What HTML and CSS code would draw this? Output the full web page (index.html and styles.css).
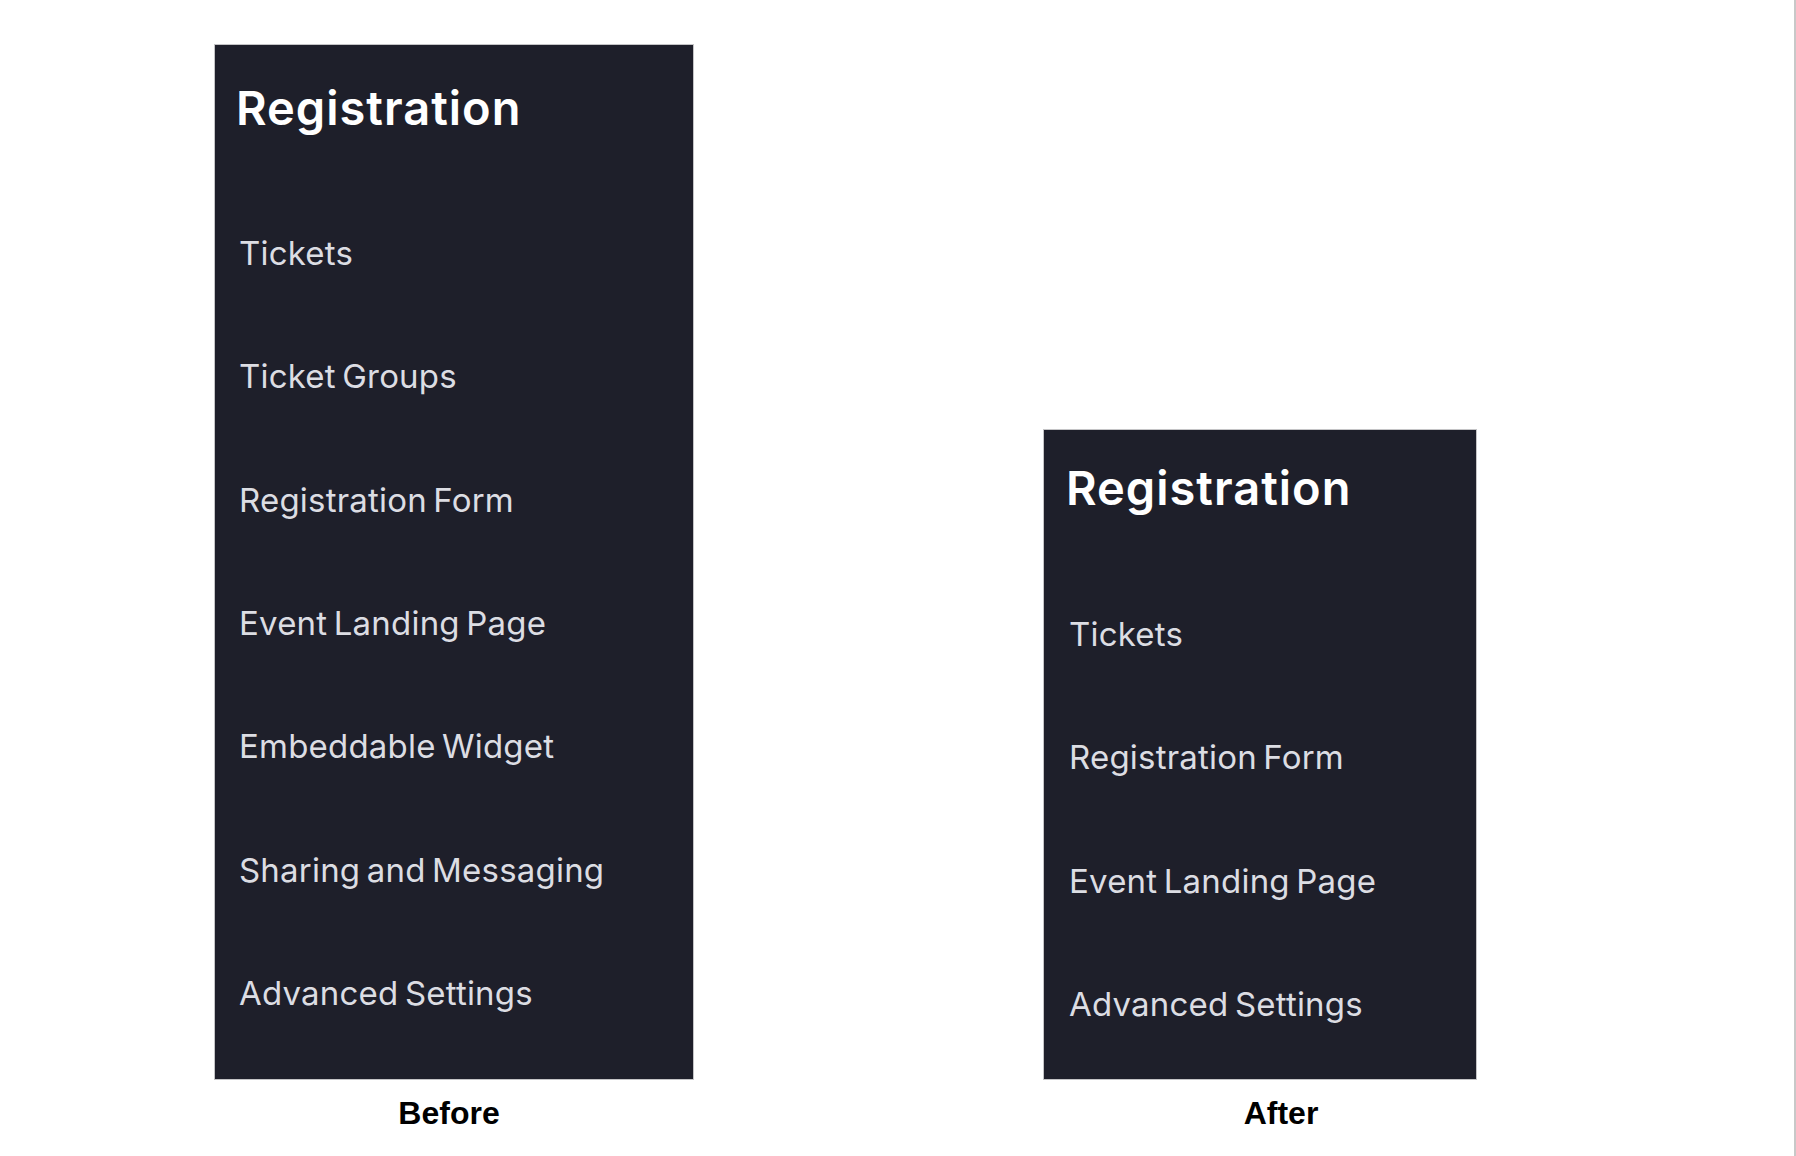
FILE: index.html
```html
<!DOCTYPE html>
<html lang="en">
<head>
    <meta charset="UTF-8">
    <meta name="viewport" content="width=device-width, initial-scale=1.0">
    <title>Registration menu - before and after</title>
    <link rel="stylesheet" href="styles.css">
</head>
<body>
    <div class="page">
        <div class="figure figure-before">
            <div class="panel panel-before">
                <h2 class="panel-title">Registration</h2>
                <ul class="menu">
                    <li>Tickets</li>
                    <li>Ticket Groups</li>
                    <li>Registration Form</li>
                    <li>Event Landing Page</li>
                    <li>Embeddable Widget</li>
                    <li>Sharing and Messaging</li>
                    <li>Advanced Settings</li>
                </ul>
            </div>
            <div class="caption caption-before">Before</div>
        </div>
        <div class="figure figure-after">
            <div class="panel panel-after">
                <h2 class="panel-title">Registration</h2>
                <ul class="menu">
                    <li>Tickets</li>
                    <li>Registration Form</li>
                    <li>Event Landing Page</li>
                    <li>Advanced Settings</li>
                </ul>
            </div>
            <div class="caption caption-after">After</div>
        </div>
    </div>
</body>
</html>
```

FILE: styles.css
```css
body {
    margin: 0;
    background-color: #fff;
    font-family: Inter, "Liberation Sans", sans-serif;
}

.page {
    display: flex;
    align-items: flex-start;
    width: 1796px;
    height: 1156px;
    box-sizing: border-box;
    border-right: 2px solid #c8c8c8;
}

.figure {
    display: flex;
    flex-direction: column;
}

.figure-before {
    margin-left: 214px;
    margin-top: 44px;
}

.figure-after {
    margin-left: 349px;
    margin-top: 429px;
}

.panel {
    background-color: #1e1f2a;
    border: 1px solid #c4c4c6;
    box-sizing: border-box;
}

.panel-before {
    width: 480px;
    height: 1036px;
    padding: 33px 0 0 21px;
}

.panel-after {
    width: 434px;
    height: 651px;
    padding: 28px 0 0 22px;
}

.panel-title {
    margin: 0;
    font-size: 47px;
    line-height: 60px;
    font-weight: 600;
    letter-spacing: 1px;
    color: #fff;
}

.menu {
    list-style: none;
    margin: 54px 0 0 3px;
    padding: 0;
}

.panel-after .menu {
    margin-top: 55px;
}

.menu li {
    font-size: 33px;
    line-height: 123.33px;
    letter-spacing: 0.2px;
    word-spacing: -3px;
    color: #dcdde3;
}

.caption {
    margin-top: 15px;
    font-family: "Liberation Sans", Arial, sans-serif;
    font-size: 32px;
    line-height: 37px;
    font-weight: 700;
    color: #000;
    text-align: center;
}

.caption-before {
    padding-right: 10px;
}

.caption-after {
    padding-left: 42px;
}
```
